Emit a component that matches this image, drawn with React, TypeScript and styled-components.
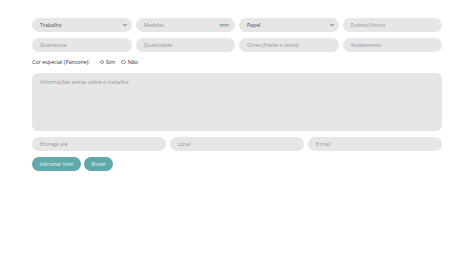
import React from 'react';
import styled, { createGlobalStyle } from 'styled-components';

const GlobalStyle = createGlobalStyle`
  html, body {
    margin: 0;
    padding: 0;
    background: #ffffff;
    font-family: 'Open Sans', 'Liberation Sans', sans-serif;
  }
`;

const Page = styled.div`
  width: 410px;
  padding: 18px 0 0 32px;
  display: flex;
  flex-direction: column;
`;

const Row = styled.div<{ cols: number }>`
  display: grid;
  grid-template-columns: repeat(${(p) => p.cols}, 1fr);
  gap: 4px;
  margin-bottom: 6px;
`;

const FieldWrap = styled.div`
  position: relative;
  height: 14px;
`;

const Input = styled.input`
  display: block;
  box-sizing: border-box;
  width: 100%;
  height: 14px;
  border: none;
  border-radius: 7px;
  background: #e6e6e6;
  padding: 0 8px;
  font-family: inherit;
  font-size: 5.2px;
  color: #555;
  outline: none;
  &::placeholder {
    color: #949494;
  }
`;

const Select = styled.select`
  display: block;
  box-sizing: border-box;
  width: 100%;
  height: 14px;
  border: none;
  border-radius: 7px;
  background: #e6e6e6;
  padding: 0 8px;
  font-family: inherit;
  font-size: 5.2px;
  color: #4a4a4a;
  appearance: none;
  outline: none;
`;

const Chevron = styled.svg`
  position: absolute;
  right: 5px;
  top: 5px;
  width: 4px;
  height: 4px;
  pointer-events: none;
`;

const Suffix = styled.span`
  position: absolute;
  right: 6px;
  top: 0;
  line-height: 14px;
  font-size: 5.2px;
  color: #666;
`;

const RadioLine = styled.div`
  display: flex;
  align-items: center;
  height: 10px;
  margin: -1px 0 6px;
  font-size: 5.4px;
  color: #333;
`;

const Label = styled.span`
  margin-right: 10px;
`;

const Choice = styled.label`
  display: flex;
  align-items: center;
  margin-right: 6px;
`;

const Circle = styled.span`
  box-sizing: border-box;
  width: 4.5px;
  height: 4.5px;
  border: 0.6px solid #999;
  border-radius: 50%;
  margin-right: 2px;
`;

const TextArea = styled.textarea`
  box-sizing: border-box;
  width: 100%;
  height: 58px;
  border: none;
  border-radius: 6px;
  background: #e6e6e6;
  padding: 5px 8px;
  font-family: inherit;
  font-size: 5.2px;
  color: #555;
  outline: none;
  margin-bottom: 6px;
  display: block;
  &::placeholder {
    color: #949494;
  }
  &::-webkit-resizer {
    background: transparent;
  }
`;

const Buttons = styled.div`
  display: flex;
  gap: 3px;
`;

const Button = styled.button`
  height: 14px;
  border: none;
  border-radius: 7px;
  background: #5fa9a9;
  color: #eef6f6;
  font-family: inherit;
  font-size: 5px;
  padding: 0 7.5px;
  cursor: pointer;
`;

function SelectField({ value }: { value: string }) {
  return (
    <FieldWrap>
      <Select defaultValue={value}>
        <option>{value}</option>
      </Select>
      <Chevron viewBox="0 0 10 10">
        <path d="M1 3 L5 7 L9 3" fill="none" stroke="#333" strokeWidth="2" />
      </Chevron>
    </FieldWrap>
  );
}

export default function App() {
  return (
    <>
      <GlobalStyle />
      <Page>
        <Row cols={4}>
          <SelectField value="Trabalho" />
          <FieldWrap>
            <Input placeholder="Medidas" />
            <Suffix>mm</Suffix>
          </FieldWrap>
          <SelectField value="Papel" />
          <Input placeholder="Dobras/Vincos" />
        </Row>
        <Row cols={4}>
          <Input placeholder="Gramatura" />
          <Input placeholder="Quantidade" />
          <Input placeholder="Cores (frente x verso)" />
          <Input placeholder="Acabamento" />
        </Row>
        <RadioLine>
          <Label>Cor especial (Pantone):</Label>
          <Choice>
            <Circle />
            Sim
          </Choice>
          <Choice>
            <Circle />
            Não
          </Choice>
        </RadioLine>
        <TextArea placeholder="Informações extras sobre o trabalho:" />
        <Row cols={3}>
          <Input placeholder="Entrega até" />
          <Input placeholder="Local" />
          <Input placeholder="E-mail" />
        </Row>
        <Buttons>
          <Button>Adicionar Item</Button>
          <Button>Enviar</Button>
        </Buttons>
      </Page>
    </>
  );
}
